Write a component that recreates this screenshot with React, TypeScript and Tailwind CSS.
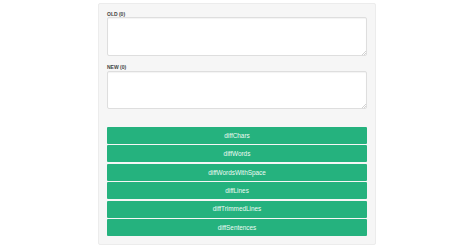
import React from "react";

const buttons = [
  "diffChars",
  "diffWords",
  "diffWordsWithSpace",
  "diffLines",
  "diffTrimmedLines",
  "diffSentences",
];

function Area({ h }: { h: string }) {
  return (
    <div className="relative">
      <textarea
        className={`block w-full ${h} resize-none bg-white border border-[#dedede] rounded-[2px] shadow-[inset_0_1px_1px_rgba(0,0,0,0.05)] outline-none`}
      />
      <svg
        className="absolute right-[1px] bottom-[1px] w-[4px] h-[4px] pointer-events-none"
        viewBox="0 0 4 4"
      >
        <path d="M4 0 L0 4 M4 2 L2 4" stroke="#b5b5b5" strokeWidth="0.6" />
      </svg>
    </div>
  );
}

export default function App() {
  return (
    <div
      className="w-[474px] h-[248px] bg-white overflow-hidden"
      style={{ fontFamily: '"Liberation Sans", Arial, sans-serif' }}
    >
      <div className="ml-[98px] mt-[3px] w-[278px] bg-[#f6f6f6] border border-[#ececec] rounded-[2px] px-[8px] pt-[7px] pb-[8px]">
        <div className="text-[5px] leading-[6px] font-bold text-[#444] h-[6px]">OLD (0)</div>
        <Area h="h-[39px]" />
        <div className="mt-[8px] mb-[1px] text-[5px] leading-[6px] font-bold text-[#444] h-[6px]">NEW (0)</div>
        <Area h="h-[38px]" />
        <div className="mt-[18px] flex flex-col gap-[1.8px]">
          {buttons.map((b) => (
            <button
              key={b}
              className="h-[16.7px] w-full bg-[#25b27e] text-[#eefaf4] text-[6.4px] rounded-[1px] flex items-center justify-center"
            >
              {b}
            </button>
          ))}
        </div>
      </div>
    </div>
  );
}
